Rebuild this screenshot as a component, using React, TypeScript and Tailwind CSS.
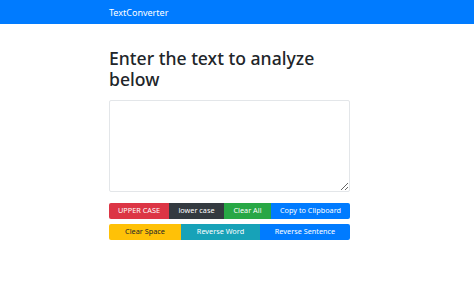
import React from "react";

const btn = "h-[16px] flex items-center justify-center text-[7.3px] leading-none";

export default function App() {
  return (
    <div className="w-[474px] h-[296px] bg-white" style={{ fontFamily: '"Noto Sans", "Open Sans", sans-serif' }}>
      <nav className="h-[24px] bg-[#007bff] flex items-center pl-[109px]">
        <span className="text-white text-[9px] leading-none">TextConverter</span>
      </nav>
      <div className="pl-[109px] w-[350px] pt-[24px]">
        <h1 className="text-[17.6px] leading-[21px] font-medium text-[#212529] w-[241px]">
          Enter the text to analyze below
        </h1>
        <textarea className="mt-[10px] block w-[241px] h-[92px] border border-[#e3e6e9] rounded-[2px] outline-none resize" />
        <div className="mt-[11px] flex w-[241px]">
          <button className={`${btn} w-[60px] bg-[#dc3545] text-white rounded-l-[2px]`}>UPPER CASE</button>
          <button className={`${btn} w-[55px] bg-[#343a40] text-white`}>lower case</button>
          <button className={`${btn} w-[47px] bg-[#28a745] text-white`}>Clear All</button>
          <button className={`${btn} w-[79px] bg-[#007bff] text-white rounded-r-[2px]`}>Copy to Clipboard</button>
        </div>
        <div className="mt-[5px] flex w-[241px]">
          <button className={`${btn} w-[72px] bg-[#ffc107] text-[#212529] rounded-l-[2px]`}>Clear Space</button>
          <button className={`${btn} w-[79px] bg-[#17a2b8] text-white`}>Reverse Word</button>
          <button className={`${btn} w-[90px] bg-[#007bff] text-white rounded-r-[2px]`}>Reverse Sentence</button>
        </div>
      </div>
    </div>
  );
}
